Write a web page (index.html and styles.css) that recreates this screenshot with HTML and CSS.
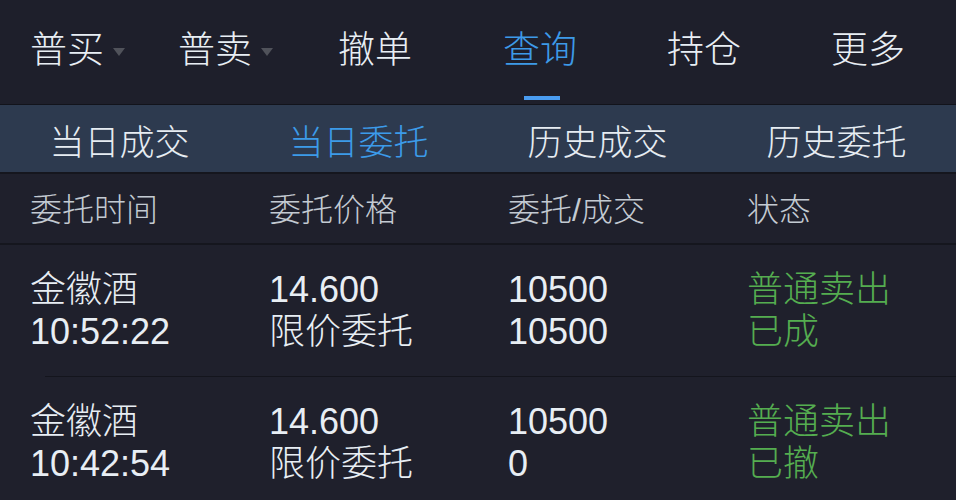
FILE: index.html
```html
<!DOCTYPE html>
<html lang="zh-CN">
<head>
<meta charset="utf-8">
<title>查询 - 当日委托</title>
<link rel="stylesheet" href="styles.css">
</head>
<body>
<div class="screen">
  <header class="topnav">
    <div class="tab">普买<span class="caret"></span></div>
    <div class="tab">普卖<span class="caret"></span></div>
    <div class="tab">撤单</div>
    <div class="tab active">查询</div>
    <div class="tab">持仓</div>
    <div class="tab">更多</div>
  </header>

  <nav class="subtabs">
    <div class="subtab">当日成交</div>
    <div class="subtab active">当日委托</div>
    <div class="subtab">历史成交</div>
    <div class="subtab">历史委托</div>
  </nav>

  <div class="table-head">
    <div>委托时间</div>
    <div>委托价格</div>
    <div>委托/成交</div>
    <div>状态</div>
  </div>

  <div class="orders">
    <div class="order">
      <div class="cell"><span>金徽酒</span><span>10:52:22</span></div>
      <div class="cell"><span>14.600</span><span>限价委托</span></div>
      <div class="cell"><span>10500</span><span>10500</span></div>
      <div class="cell status"><span>普通卖出</span><span>已成</span></div>
    </div>
    <div class="order">
      <div class="cell"><span>金徽酒</span><span>10:42:54</span></div>
      <div class="cell"><span>14.600</span><span>限价委托</span></div>
      <div class="cell"><span>10500</span><span>0</span></div>
      <div class="cell status"><span>普通卖出</span><span>已撤</span></div>
    </div>
  </div>
</div>
</body>
</html>
```

FILE: styles.css
```css
html, body {
  margin: 0;
  padding: 0;
  background: #1f202c;
}

body {
  font-family: "Liberation Sans", "Noto Sans CJK SC", sans-serif;
  font-weight: 300;
  color: #e7edf3;
}

.screen {
  width: 956px;
  height: 500px;
  overflow: hidden;
  background: #1f202c;
}

/* top trading menu */
.topnav {
  display: grid;
  grid-template-columns: 148px 160px 165px 164px 164px auto;
  padding-left: 30px;
  height: 105px;
  background: #1e1f2b;
  border-bottom: 1px solid #12131b;
  box-sizing: border-box;
}

.tab {
  position: relative;
  display: flex;
  align-items: center;
  height: 100px;
  font-size: 37px;
  line-height: 1;
  color: #e8eef4;
  white-space: nowrap;
}

.tab.active {
  color: #3d9ae8;
}

.tab.active::after {
  content: "";
  position: absolute;
  left: 21px;
  bottom: 0;
  width: 36px;
  height: 4px;
  background: #4a9cf0;
}

.caret {
  display: inline-block;
  width: 0;
  height: 0;
  margin-left: 9px;
  margin-top: 4px;
  border-left: 6px solid transparent;
  border-right: 6px solid transparent;
  border-top: 8px solid #50525a;
}

/* secondary tabs */
.subtabs {
  display: grid;
  grid-template-columns: repeat(4, 1fr);
  height: 67px;
  background: #2d3a4f;
  border-bottom: 2px solid #15161e;
}

.subtab {
  display: flex;
  align-items: center;
  justify-content: center;
  font-size: 35px;
  color: #e6ecf2;
  padding-top: 2px;
}

.subtab.active {
  color: #3c9be9;
}

/* column headings */
.table-head {
  display: grid;
  grid-template-columns: repeat(4, 1fr);
  height: 69px;
  align-items: center;
  font-size: 32px;
  color: #c3cad2;
  border-bottom: 2px solid #15161e;
}

.table-head > div {
  padding-left: 30px;
  padding-bottom: 3px;
}

/* order rows */
.order {
  display: grid;
  grid-template-columns: repeat(4, 1fr);
  height: 131px;
  position: relative;
  box-sizing: border-box;
  padding-top: 24px;
}

.order + .order::before {
  content: "";
  position: absolute;
  left: 45px;
  right: 0;
  top: 0;
  height: 1px;
  background: #14151d;
}

.order + .order {
  padding-top: 25px;
}

.cell {
  display: flex;
  flex-direction: column;
  padding-left: 30px;
  font-size: 36px;
  line-height: 42px;
  color: #e8eef4;
}

.cell.status {
  color: #55ad50;
}
```
